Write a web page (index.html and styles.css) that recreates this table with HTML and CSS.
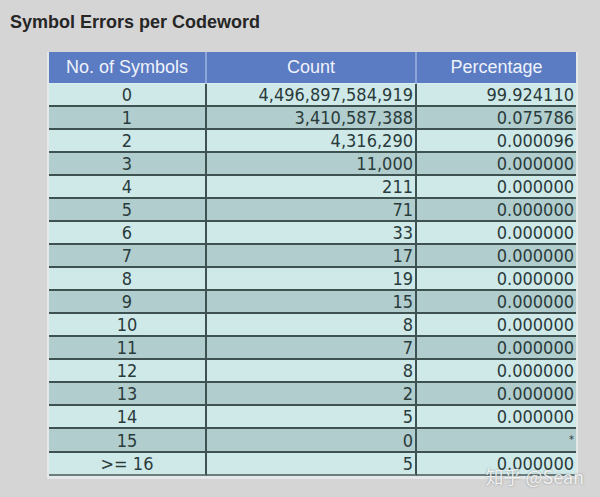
FILE: index.html
```html
<!DOCTYPE html>
<html>
<head>
<meta charset="utf-8">
<link rel="stylesheet" href="styles.css">
</head>
<body>
<div class="page">
  <h1 class="title">Symbol Errors per Codeword</h1>
  <div class="frame">
    <table class="grid">
      <thead>
        <tr><th class="c1">No. of Symbols</th><th class="c2">Count</th><th class="c3">Percentage</th></tr>
      </thead>
      <tbody>
        <tr class="lt"><td class="c1">0</td><td class="c2">4,496,897,584,919</td><td class="c3">99.924110</td></tr>
        <tr class="dk"><td class="c1">1</td><td class="c2">3,410,587,388</td><td class="c3">0.075786</td></tr>
        <tr class="lt"><td class="c1">2</td><td class="c2">4,316,290</td><td class="c3">0.000096</td></tr>
        <tr class="dk"><td class="c1">3</td><td class="c2">11,000</td><td class="c3">0.000000</td></tr>
        <tr class="lt"><td class="c1">4</td><td class="c2">211</td><td class="c3">0.000000</td></tr>
        <tr class="dk"><td class="c1">5</td><td class="c2">71</td><td class="c3">0.000000</td></tr>
        <tr class="lt"><td class="c1">6</td><td class="c2">33</td><td class="c3">0.000000</td></tr>
        <tr class="dk"><td class="c1">7</td><td class="c2">17</td><td class="c3">0.000000</td></tr>
        <tr class="lt"><td class="c1">8</td><td class="c2">19</td><td class="c3">0.000000</td></tr>
        <tr class="dk"><td class="c1">9</td><td class="c2">15</td><td class="c3">0.000000</td></tr>
        <tr class="lt"><td class="c1">10</td><td class="c2">8</td><td class="c3">0.000000</td></tr>
        <tr class="dk"><td class="c1">11</td><td class="c2">7</td><td class="c3">0.000000</td></tr>
        <tr class="lt"><td class="c1">12</td><td class="c2">8</td><td class="c3">0.000000</td></tr>
        <tr class="dk"><td class="c1">13</td><td class="c2">2</td><td class="c3">0.000000</td></tr>
        <tr class="lt"><td class="c1">14</td><td class="c2">5</td><td class="c3">0.000000</td></tr>
        <tr class="dk"><td class="c1">15</td><td class="c2">0</td><td class="c3"><span class="star">*</span></td></tr>
        <tr class="lt"><td class="c1">&gt;= 16</td><td class="c2">5</td><td class="c3">0.000000</td></tr>
      </tbody>
    </table>
    <div class="mark">知乎 @Sean</div>
  </div>
</div>
</body>
</html>
```
FILE: styles.css
```css
html, body {
  margin: 0;
  padding: 0;
  background: #d5d5d5;
}
.page {
  width: 600px;
  height: 497px;
  padding: 12px 0 0 10px;
  box-sizing: border-box;
}
.title {
  margin: 0;
  font-family: "Liberation Sans", Arial, sans-serif;
  font-weight: bold;
  font-size: 18px;
  line-height: 20px;
  color: #262626;
}
.frame {
  position: relative;
  margin: 20px 0 0 37px;
  padding: 0 2px 3px 0;
  background: #e4e8e8;
  box-sizing: border-box;
  width: 531px;
}
.grid {
  border-collapse: separate;
  border-spacing: 0;
  width: 527px;
  margin-left: 2px;
  table-layout: fixed;
}
.grid th {
  background: #5b7bc2;
  color: #eef2fb;
  font-family: "Liberation Sans", Arial, sans-serif;
  font-weight: normal;
  font-size: 18px;
  height: 31px;
  padding: 0;
  text-align: center;
  border-right: 2px solid #8ea5d9;
  border-bottom: 1px solid #d6eeee;
}
.grid th.c3 { border-right: none; }
.grid .c1 { width: 156px; }
.grid .c2 { width: 208px; }
.grid td {
  font-family: "DejaVu Sans Condensed", "DejaVu Sans", sans-serif;
  font-stretch: condensed;
  font-size: 18px;
  color: #2a3b3b;
  height: 21px;
  line-height: 21px;
  padding: 0 2px 0 0;
  text-align: right;
  border-right: 2px solid #3e5252;
  border-bottom: 2px solid #3e5252;
}
.grid td.c1 { text-align: center; padding: 0; }
.grid td.c3 { border-right: none; }
.grid tr:last-child td { border-bottom: 2px solid #6b7d7d; }
.lt td { background: #cfe9e9; }
.dk td { background: #b1cdcd; }
.star {
  font-size: 11px;
  vertical-align: top;
  line-height: 22px;
}
.mark {
  position: absolute;
  right: -6px;
  bottom: -9px;
  font-family: "Noto Sans CJK SC", "Liberation Sans", sans-serif;
  font-size: 18px;
  line-height: 24px;
  color: rgba(255, 255, 255, 0.85);
  text-shadow: 0 0 2px rgba(60, 60, 60, 0.5);
}
```
